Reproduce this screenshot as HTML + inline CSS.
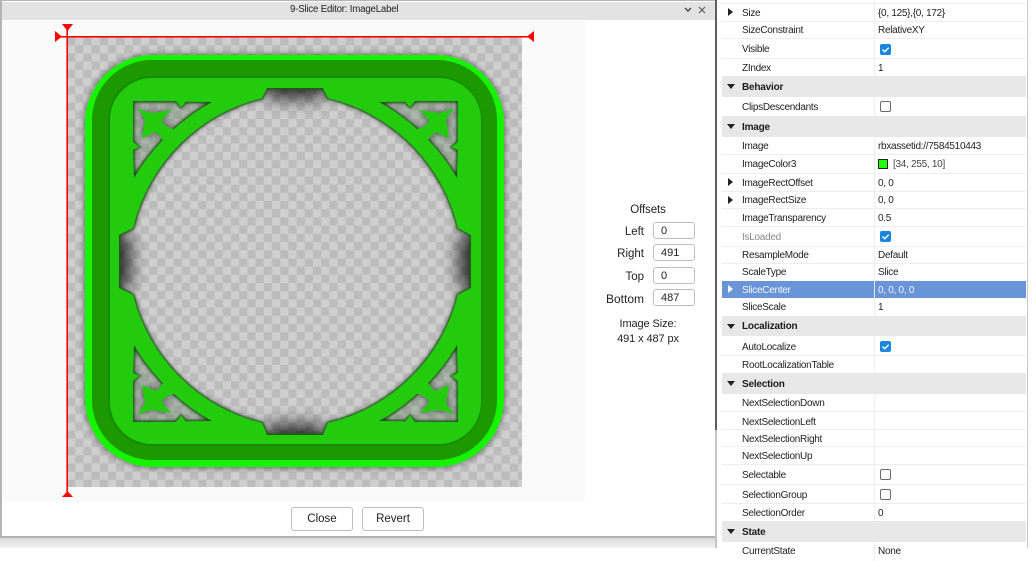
<!DOCTYPE html>
<html><head><meta charset="utf-8"><style>
*{box-sizing:border-box}
html,body{margin:0;padding:0;width:1034px;height:548px;overflow:hidden;background:#fff;font-family:"Liberation Sans",sans-serif;color:#222}
.a{position:absolute}
.r{position:absolute;left:722px;width:304px;border-bottom:1px solid #eeeeee;font-size:10px;letter-spacing:-.28px}
.r .l{position:absolute;left:20px;top:1px;line-height:inherit;white-space:nowrap}
.r .v{position:absolute;left:156px;top:1px;line-height:inherit;white-space:nowrap}
.r .d{position:absolute;left:152px;top:0;bottom:-1px;width:1px;background:#eeeeee}
.h{position:absolute;left:722px;width:304px;background:#e8e8e8;font-size:10px;font-weight:bold;letter-spacing:-.2px;color:#1c1c1c}
.h .l{position:absolute;left:20px;top:1px;line-height:inherit}
.td{position:absolute;left:5px;width:0;height:0;border-left:4px solid transparent;border-right:4px solid transparent;border-top:5px solid #222}
.tr{position:absolute;left:6px;width:0;height:0;border-top:4px solid transparent;border-bottom:4px solid transparent;border-left:5px solid #222}
.cb{position:absolute;left:158px;width:11px;height:11px;border-radius:2px}
.on{background:#1a86dc}
.off{background:#fff;border:1px solid #6a6a6a}
.lb{position:absolute;right:390px;font-size:11.5px;line-height:16px;color:#222}
.in{position:absolute;left:653px;width:42px;height:17px;border:1px solid #bdbdbd;border-radius:3px;font-size:11px;line-height:16px;padding-left:7px;background:#fff;color:#222}
.btn{position:absolute;top:507px;width:62px;height:24px;border:1px solid #bdbdbd;border-radius:3px;background:#fff;text-align:center;font-size:11.5px;line-height:22px;color:#1c1c1c}
.c{position:absolute;left:600px;width:96px;text-align:center;font-size:11px;line-height:15px;letter-spacing:-.1px;color:#222}
</style></head><body>

<!-- dialog -->
<div class="a" style="left:0;top:538px;width:716px;height:10px;background:linear-gradient(#dadada,#f4f4f4)"></div>
<div class="a" style="left:0;top:0;width:716px;height:538px;background:#fff;border:1px solid #b4b4b4;border-width:1px 1px 2px 2px"></div>
<div class="a" style="left:2px;top:2px;width:713px;height:18px;background:#e3e3e3"></div>
<div class="a" style="left:290px;top:3px;font-size:9.7px;line-height:14px;letter-spacing:-.2px;color:#222;white-space:nowrap">9-Slice Editor: ImageLabel</div>
<svg class="a" style="left:683px;top:5px" width="26" height="10" viewBox="0 0 26 10"><path d="M2 3l3 3 3-3" fill="none" stroke="#444" stroke-width="1.4"/><path d="M16 2l6 6M22 2l-6 6" fill="none" stroke="#555" stroke-width="1.1"/></svg>
<div class="a" style="left:3px;top:21px;width:582px;height:481px;background:#fafafa"></div>

<svg class="a" style="left:0;top:0" width="1034" height="548" viewBox="0 0 1034 548">
<defs>
<pattern id="ck" x="67" y="37" width="16.4" height="16.4" patternUnits="userSpaceOnUse">
<rect width="16.4" height="16.4" fill="#cfcfcf"/>
<rect width="8.2" height="8.2" fill="#bcbcbc"/>
<rect x="8.2" y="8.2" width="8.2" height="8.2" fill="#bcbcbc"/>
</pattern>
<filter id="sh" x="-10%" y="-10%" width="120%" height="120%"><feDropShadow dx="0" dy="0" stdDeviation="3.5" flood-color="#000" flood-opacity=".6"/></filter>
<filter id="bl" x="-80%" y="-80%" width="260%" height="260%"><feGaussianBlur stdDeviation="8"/></filter>
<filter id="b1" x="-5%" y="-5%" width="110%" height="110%"><feGaussianBlur stdDeviation=".8"/></filter>
<path id="hole" d="M267 88L323 88L328 98A175 175 0 0 1 458 228L471 235L471 288L458 295A175 175 0 0 1 328 423L323 435L267 435L262 423A175 175 0 0 1 133 295L119 288L119 235L133 228A175 175 0 0 1 262 98Z"/>
<path id="orn" d="M133 101L176 101L181 107L186 101.5L212 102A210 210 0 0 0 134 178L133 150L139 147L133 142Z"/>
<path id="star" d="M137 108C144 111 149 113 153 113C159 112 166 111 172 110C167 114 163 118 162 122C164 126 170 128 176 130L164 142C162 138 159 134 155 132C151 134 147 136 142 138C143 132 144 126 145 120C143 116 140 112 137 108Z"/>
<mask id="m" maskUnits="userSpaceOnUse" x="0" y="0" width="1034" height="548">
<rect width="1034" height="548" fill="#fff"/>
<use href="#hole" fill="#000"/>
<use href="#orn" fill="#000"/>
<use href="#orn" fill="#000" transform="translate(591,0) scale(-1,1)"/>
<use href="#orn" fill="#000" transform="translate(0,523) scale(1,-1)"/>
<use href="#orn" fill="#000" transform="translate(591,523) scale(-1,-1)"/>
</mask>
</defs>
<rect x="67" y="37" width="455" height="450" fill="url(#ck)"/>
<g filter="url(#bl)" fill="#000" opacity=".7">
<rect x="100" y="235" width="32" height="53"/>
<rect x="458" y="235" width="32" height="53"/>
<rect x="267" y="68" width="56" height="32"/>
<rect x="267" y="423" width="56" height="32"/>
</g>
<g fill="#3c6a34" fill-opacity=".22" stroke="#2f7f25" stroke-width="3.4" filter="url(#b1)" stroke-opacity=".85">
<use href="#orn"/>
<use href="#orn" transform="translate(591,0) scale(-1,1)"/>
<use href="#orn" transform="translate(0,523) scale(1,-1)"/>
<use href="#orn" transform="translate(591,523) scale(-1,-1)"/>
<use href="#hole" fill="none"/>
</g>
<g filter="url(#sh)">
<g mask="url(#m)">
<rect x="85" y="55" width="419" height="412" rx="68" fill="#19f306"/>
<rect x="92" y="60" width="405" height="400" rx="60" fill="#1a9800"/>
<rect x="108" y="76" width="374" height="370" rx="44" fill="#178a02"/>
<rect x="110" y="78" width="371" height="366" rx="42" fill="#21cc0e"/>
</g>
<g fill="#21cc0e">
<use href="#star"/>
<use href="#star" transform="translate(591,0) scale(-1,1)"/>
<use href="#star" transform="translate(0,523) scale(1,-1)"/>
<use href="#star" transform="translate(591,523) scale(-1,-1)"/>
</g>
</g>
<!-- guides -->
<g fill="#f00">
<rect x="56" y="36" width="474" height="1.6"/>
<rect x="66.4" y="27" width="1.6" height="467"/>
<path d="M62 24H73L67.5 31Z"/>
<path d="M62 497H73L67.5 491Z"/>
<path d="M55 31V42L62 36.5Z"/>
<path d="M534 31V42L527 36.5Z"/>
</g>
</svg>

<!-- offsets -->
<div class="c" style="top:203px;font-size:11.5px">Offsets</div>
<div class="lb" style="top:224px">Left</div><div class="in" style="top:222px">0</div>
<div class="lb" style="top:246px">Right</div><div class="in" style="top:244px">491</div>
<div class="lb" style="top:269px">Top</div><div class="in" style="top:267px">0</div>
<div class="lb" style="top:291px;font-size:12px">Bottom</div><div class="in" style="top:289px">487</div>
<div class="c" style="top:317px">Image Size:</div>
<div class="c" style="top:332px">491 x 487 px</div>
<div class="btn" style="left:291px">Close</div>
<div class="btn" style="left:362px">Revert</div>

<!-- separator -->
<div class="a" style="left:715px;top:0;width:2px;height:430px;background:#5a5f66"></div>
<div class="a" style="left:715px;top:430px;width:2px;height:118px;background:#c4c4c4"></div>
<div class="a" style="left:1027px;top:0;width:1px;height:548px;background:#c8c8c8"></div>

<!-- properties -->
<div class="r" style="top:-14px;height:18px;line-height:17px"><div class="d"></div></div>
<div class="r" style="top:4px;height:18px;line-height:17px"><div class="tr" style="top:4px"></div><div class="l">Size</div><div class="d"></div><div class="v">{0, 125},{0, 172}</div></div>
<div class="r" style="top:22px;height:17px;line-height:16px"><div class="l">SizeConstraint</div><div class="d"></div><div class="v">RelativeXY</div></div>
<div class="r" style="top:39px;height:20px;line-height:19px"><div class="l">Visible</div><div class="d"></div><div class="cb on" style="top:5px"><svg width="11" height="11" style="display:block"><path d="M2.5 5.5l2.2 2.2 4-4" fill="none" stroke="#fff" stroke-width="1.4"/></svg></div></div>
<div class="r" style="top:59px;height:17px;line-height:17px;border:0"><div class="l">ZIndex</div><div class="d"></div><div class="v">1</div></div>
<div class="h" style="top:76px;height:21px;line-height:21px"><div class="td" style="top:8px"></div><div class="l">Behavior</div></div>
<div class="r" style="top:97px;height:19px;line-height:19px;border:0"><div class="l">ClipsDescendants</div><div class="d"></div><div class="cb off" style="top:4px"></div></div>
<div class="h" style="top:116px;height:21px;line-height:21px"><div class="td" style="top:8px"></div><div class="l">Image</div></div>
<div class="r" style="top:137px;height:18px;line-height:17px"><div class="l">Image</div><div class="d"></div><div class="v">rbxassetid://7584510443</div></div>
<div class="r" style="top:155px;height:19px;line-height:18px"><div class="l">ImageColor3</div><div class="d"></div><div class="a" style="left:156px;top:4px;width:10px;height:10px;background:#22ff0a;border:1px solid #222"></div><div class="v" style="left:171px;color:#444">[34, 255, 10]</div></div>
<div class="r" style="top:174px;height:18px;line-height:17px"><div class="tr" style="top:4px"></div><div class="l">ImageRectOffset</div><div class="d"></div><div class="v">0, 0</div></div>
<div class="r" style="top:192px;height:17px;line-height:16px"><div class="tr" style="top:4px"></div><div class="l">ImageRectSize</div><div class="d"></div><div class="v">0, 0</div></div>
<div class="r" style="top:209px;height:18px;line-height:17px"><div class="l">ImageTransparency</div><div class="d"></div><div class="v">0.5</div></div>
<div class="r" style="top:227px;height:20px;line-height:19px"><div class="l" style="color:#8a8a8a">IsLoaded</div><div class="d"></div><div class="cb on" style="top:4px"><svg width="11" height="11" style="display:block"><path d="M2.5 5.5l2.2 2.2 4-4" fill="none" stroke="#fff" stroke-width="1.4"/></svg></div></div>
<div class="r" style="top:247px;height:17px;line-height:16px"><div class="l">ResampleMode</div><div class="d"></div><div class="v">Default</div></div>
<div class="r" style="top:264px;height:17px;line-height:16px;border:0"><div class="l">ScaleType</div><div class="d"></div><div class="v">Slice</div></div>
<div class="r" style="top:281px;height:17px;line-height:17px;background:#6a94d8;border:0;color:#f2f5fb"><div class="tr" style="top:4px;border-left-color:#fff"></div><div class="l">SliceCenter</div><div class="d" style="background:#e4ecf8"></div><div class="v">0, 0, 0, 0</div></div>
<div class="r" style="top:298px;height:18px;line-height:17px;border:0"><div class="l">SliceScale</div><div class="d"></div><div class="v">1</div></div>
<div class="h" style="top:316px;height:20px;line-height:20px"><div class="td" style="top:8px"></div><div class="l">Localization</div></div>
<div class="r" style="top:336px;height:20px;line-height:21px"><div class="l">AutoLocalize</div><div class="d"></div><div class="cb on" style="top:5px"><svg width="11" height="11" style="display:block"><path d="M2.5 5.5l2.2 2.2 4-4" fill="none" stroke="#fff" stroke-width="1.4"/></svg></div></div>
<div class="r" style="top:356px;height:17px;line-height:17px;border:0"><div class="l">RootLocalizationTable</div><div class="d"></div></div>
<div class="h" style="top:373px;height:21px;line-height:21px"><div class="td" style="top:8px"></div><div class="l">Selection</div></div>
<div class="r" style="top:394px;height:18px;line-height:17px"><div class="l">NextSelectionDown</div><div class="d"></div></div>
<div class="r" style="top:412px;height:18px;line-height:19px"><div class="l">NextSelectionLeft</div><div class="d"></div></div>
<div class="r" style="top:430px;height:17px;line-height:17px"><div class="l">NextSelectionRight</div><div class="d"></div></div>
<div class="r" style="top:447px;height:18px;line-height:17px"><div class="l">NextSelectionUp</div><div class="d"></div></div>
<div class="r" style="top:465px;height:20px;line-height:19px"><div class="l">Selectable</div><div class="d"></div><div class="cb off" style="top:4px"></div></div>
<div class="r" style="top:485px;height:19px;line-height:19px"><div class="l">SelectionGroup</div><div class="d"></div><div class="cb off" style="top:4px"></div></div>
<div class="r" style="top:504px;height:17px;line-height:18px;border:0"><div class="l">SelectionOrder</div><div class="d"></div><div class="v">0</div></div>
<div class="h" style="top:521px;height:21px;line-height:22px"><div class="td" style="top:8px"></div><div class="l">State</div></div>
<div class="r" style="top:542px;height:18px;line-height:18px;border:0"><div class="l">CurrentState</div><div class="d"></div><div class="v">None</div></div>
</body></html>
